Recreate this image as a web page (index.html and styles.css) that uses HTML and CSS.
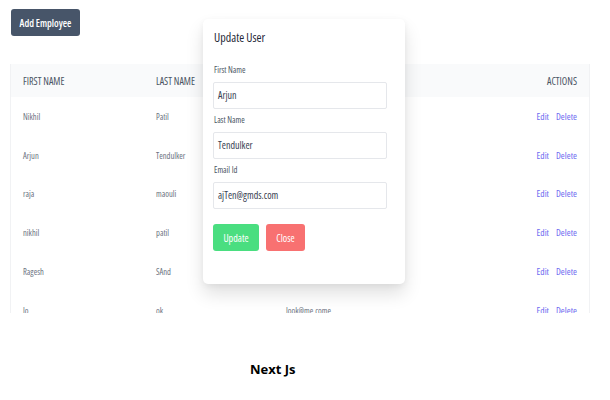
FILE: index.html
```html
<!DOCTYPE html>
<html>
<head>
<meta charset="utf-8">
<link rel="stylesheet" href="styles.css">
</head>
<body>
<div class="app">
  <button class="btn-add">Add Employee</button>
  <div class="table-wrap">
    <table class="table">
      <thead>
        <tr><th class="c1">FIRST NAME</th><th class="c2">LAST NAME</th><th class="c3"></th><th class="c4">ACTIONS</th></tr>
      </thead>
      <tbody>
        <tr><td>Nikhil</td><td>Patil</td><td></td><td class="c4"><a class="act">Edit</a><a class="act">Delete</a></td></tr>
        <tr><td>Arjun</td><td>Tendulker</td><td></td><td class="c4"><a class="act">Edit</a><a class="act">Delete</a></td></tr>
        <tr><td>raja</td><td>maouli</td><td></td><td class="c4"><a class="act">Edit</a><a class="act">Delete</a></td></tr>
        <tr><td>nikhil</td><td>patil</td><td></td><td class="c4"><a class="act">Edit</a><a class="act">Delete</a></td></tr>
        <tr><td>Ragesh</td><td>SAnd</td><td></td><td class="c4"><a class="act">Edit</a><a class="act">Delete</a></td></tr>
        <tr><td>lo</td><td>ok</td><td>look@me.come</td><td class="c4"><a class="act">Edit</a><a class="act">Delete</a></td></tr>
      </tbody>
    </table>
  </div>
  <div class="modal">
    <h2 class="modal-title">Update User</h2>
    <label class="label">First Name</label>
    <div class="input">Arjun</div>
    <label class="label">Last Name</label>
    <div class="input">Tendulker</div>
    <label class="label">Email Id</label>
    <div class="input">ajTen@gmds.com</div>
    <div class="modal-actions">
      <button class="btn btn-green">Update</button>
      <button class="btn btn-red">Close</button>
    </div>
  </div>
</div>
<footer class="footer">Next Js</footer>
</body>
</html>
```
FILE: styles.css
```css
* { box-sizing: border-box; }
body {
  margin: 0;
  font-family: "Open Sans", "DejaVu Sans", sans-serif;
  background: #fff;
}
.app {
  position: relative;
  height: 313px;
  overflow: hidden;
  padding: 9px 20px 0 10px;
  font-stretch: 75%;
}
.btn-add {
  display: block;
  margin-left: 1px;
  height: 27px;
  width: 69px;
  padding: 0;
  border: none;
  border-radius: 3px;
  background: #475569;
  color: #fff;
  font-family: inherit;
  font-stretch: 75%;
  font-weight: 600;
  font-size: 10px;
}
.table-wrap {
  margin-top: 28px;
  border-left: 1px solid #f1f2f4;
  border-right: 1px solid #f1f2f4;
}
.table {
  width: 100%;
  border-collapse: collapse;
}
.table th {
  height: 33px;
  background: #f9fafb;
  color: #4b5563;
  font-weight: 400;
  font-size: 10px;
  text-align: left;
  padding: 0 12px;
}
.table td {
  height: 38.8px;
  color: #6b7280;
  font-size: 8.5px;
  font-weight: 400;
  padding: 0 12px;
}
.c1 { width: 133px; }
.c2 { width: 130px; }
.table .c4 { text-align: right; }
.act {
  color: #6d6af0;
  font-size: 9.5px;
  font-weight: 400;
  margin-left: 7px;
}
.modal {
  position: absolute;
  left: 203px;
  top: 19px;
  width: 202px;
  height: 265px;
  background: #fff;
  border-radius: 5px;
  box-shadow: 0 10px 18px rgba(0,0,0,0.12), 0 2px 6px rgba(0,0,0,0.05);
  padding: 11px 18px 0 10px;
}
.modal-title {
  margin: 0 0 18px 1px;
  font-size: 12px;
  line-height: 16px;
  font-weight: 500;
  color: #1f2937;
}
.label {
  display: block;
  font-size: 8.5px;
  line-height: 12px;
  font-weight: 400;
  color: #4b5563;
  margin: 5px 0 6px 1px;
}
.modal-title + .label { margin-top: 0; }
.input {
  height: 27px;
  border: 1px solid #e5e7eb;
  border-radius: 2px;
  padding: 0 4px;
  font-size: 10px;
  line-height: 25px;
  color: #374151;
}
.modal-actions {
  display: flex;
  gap: 7px;
  margin-top: 15px;
}
.btn {
  height: 27px;
  border: none;
  border-radius: 3px;
  color: #fff;
  font-family: inherit;
  font-stretch: 75%;
  font-weight: 500;
  font-size: 10px;
  padding: 0;
}
.btn-green { background: #4ade80; width: 46px; }
.btn-red { background: #f87171; width: 39px; }
.footer {
  padding: 47px 0 0 250px;
  font-size: 13px;
  font-weight: 700;
  color: #000;
  line-height: 18px;
}
```
